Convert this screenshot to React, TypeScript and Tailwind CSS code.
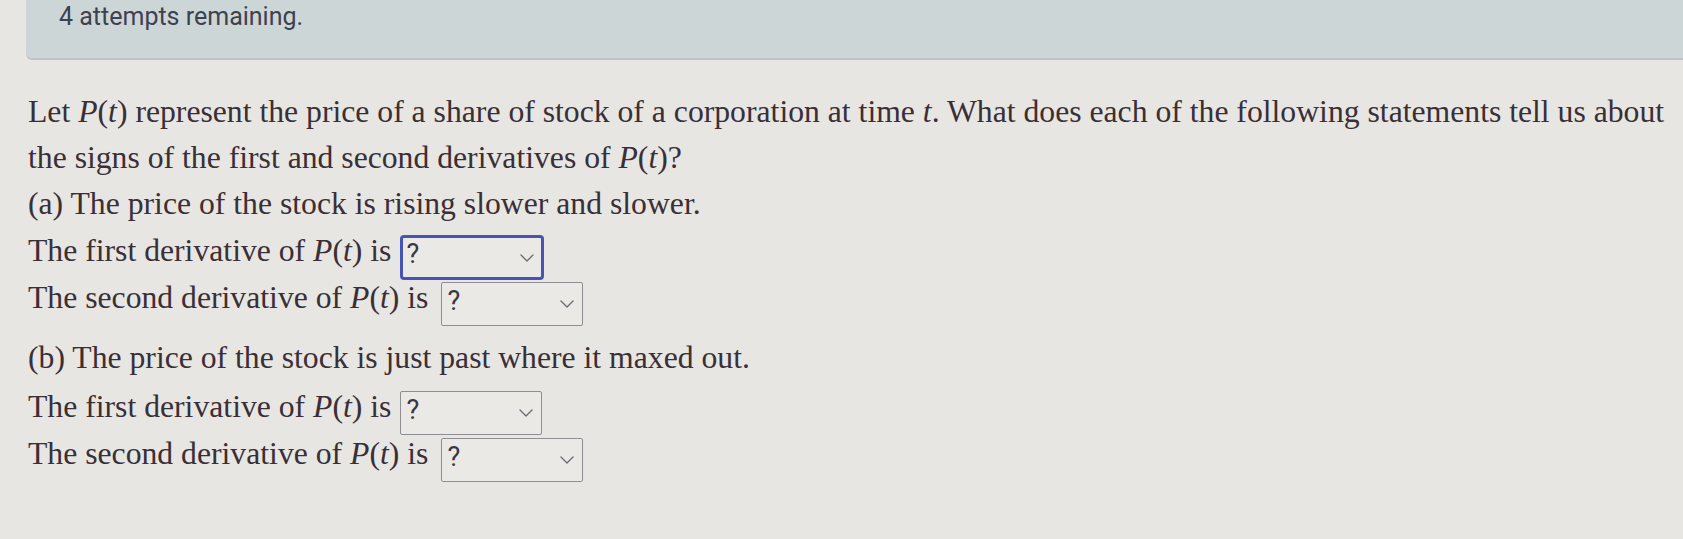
import React from 'react';

const serif = { fontFamily: '"Liberation Serif", "DejaVu Serif", serif' };
const sans = { fontFamily: 'Roboto, "Liberation Sans", sans-serif' };

const P = () => (
  <span>
    <i>P</i>(<i>t</i>)
  </span>
);

const Chevron: React.FC = () => (
  <svg width="14" height="8" viewBox="0 0 14 8" fill="none" className="text-[#6d6c74]">
    <path d="M1 1 L7 7 L13 1" stroke="currentColor" strokeWidth="1.4" strokeLinecap="round" strokeLinejoin="round" />
  </svg>
);

const Select: React.FC<{ focused?: boolean; wide?: boolean }> = ({ focused, wide }) => (
  <div
    className={
      focused
        ? 'ml-[9px] mt-[8px] flex h-[45px] w-[144px] shrink-0 items-center justify-between rounded-[4px] border-[3px] border-[#4853b6] bg-[#ebe9e5] pl-[3px] pr-[7px]'
        : 'mt-[8px] flex h-[44px] w-[142px] shrink-0 items-center justify-between rounded-[2px] border border-[#8f8e92] bg-[#ebe9e5] pl-[5px] pr-[8px] ' +
          (wide ? 'ml-[13px]' : 'ml-[9px]')
    }
  >
    <span className="mb-[6px] text-[27px] leading-none text-[#3b3640]" style={sans}>
      ?
    </span>
    <Chevron />
  </div>
);

const Row: React.FC<{ label: string; focused?: boolean; className?: string }> = ({ label, focused, className }) => (
  <div className={'flex h-[47px] items-start ' + (className ?? '')}>
    <span className="leading-[48px]">
      The {label} derivative of <P /> is
    </span>
    <Select focused={focused} wide={label === 'second'} />
  </div>
);

export default function App() {
  return (
    <div className="min-h-[539px] w-full bg-[#e7e6e2] text-[#3a2f36]">
      <div className="ml-[26px] flex h-[60px] items-start rounded-bl-[6px] border-b-2 border-[#bcc4c6] bg-[#cdd6d7] pl-[33px] pt-[2px]">
        <span className="text-[25px] leading-[30px] text-[#3d4150]" style={sans}>
          4 attempts remaining.
        </span>
      </div>

      <div className="pl-[28px] pt-[29px] text-[31.7px] leading-[46px]" style={serif}>
        <p>
          Let <P /> represent the price of a share of stock of a corporation at time <i>t</i>. What does each of the
          following statements tell us about the signs of the first and second derivatives of <P />?
        </p>
        <p>(a) The price of the stock is rising slower and slower.</p>
        <Row label="first" focused />
        <Row label="second" />
        <p className="mt-[14px]">(b) The price of the stock is just past where it maxed out.</p>
        <Row label="first" className="mt-[2px]" />
        <Row label="second" />
      </div>
    </div>
  );
}
